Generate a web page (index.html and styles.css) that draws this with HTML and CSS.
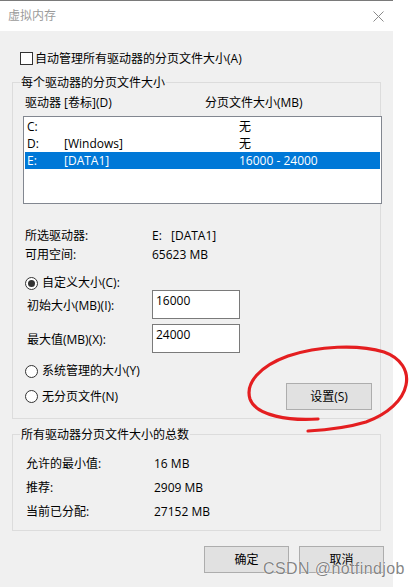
FILE: index.html
```html
<!DOCTYPE html>
<html lang="zh-CN">
<head>
<meta charset="utf-8">
<title>虚拟内存</title>
<link rel="stylesheet" href="styles.css">
</head>
<body>
<div class="window">
  <div class="titlebar">
    <span class="title">虚拟内存</span>
    <svg class="close" width="11" height="11" viewBox="0 0 11 11"><path d="M0.5 0.5 L10.5 10.5 M10.5 0.5 L0.5 10.5" stroke="#8a8a8a" stroke-width="1" fill="none"/></svg>
  </div>

  <div class="check-row">
    <span class="checkbox"></span>
    <span class="check-text">自动管理所有驱动器的分页文件大小(A)</span>
  </div>

  <div class="group group-drives">
    <div class="legend">每个驱动器的分页文件大小</div>
    <div class="col-header"><span class="h-drive">驱动器 [卷标](D)</span><span>分页文件大小(MB)</span></div>
    <div class="listbox">
      <div class="lrow"><span class="c-drive">C:</span><span class="c-label"></span><span class="c-size">无</span></div>
      <div class="lrow"><span class="c-drive">D:</span><span class="c-label">[Windows]</span><span class="c-size">无</span></div>
      <div class="lrow selected"><span class="c-drive">E:</span><span class="c-label">[DATA1]</span><span class="c-size">16000 - 24000</span></div>
    </div>
    <div class="info">
      <div class="kv"><span class="k">所选驱动器:</span><span class="v"><span class="v-drive">E:</span>[DATA1]</span></div>
      <div class="kv"><span class="k">可用空间:</span><span class="v">65623 MB</span></div>
    </div>
    <div class="radio-row r-custom"><span class="radio checked"></span><span class="radio-text">自定义大小(C):</span></div>
    <div class="field-row"><span class="field-label">初始大小(MB)(I):</span><div class="textbox">16000</div></div>
    <div class="field-row second"><span class="field-label">最大值(MB)(X):</span><div class="textbox">24000</div></div>
    <div class="radio-row r-system"><span class="radio"></span><span class="radio-text">系统管理的大小(Y)</span></div>
    <div class="radio-row r-none"><span class="radio"></span><span class="radio-text">无分页文件(N)</span><button class="btn btn-set">设置(S)</button></div>
  </div>

  <div class="group group-total">
    <div class="legend">所有驱动器分页文件大小的总数</div>
    <div class="totals">
      <div class="trow"><span class="tk">允许的最小值:</span><span>16 MB</span></div>
      <div class="trow"><span class="tk">推荐:</span><span>2909 MB</span></div>
      <div class="trow"><span class="tk">当前已分配:</span><span>27152 MB</span></div>
    </div>
  </div>

  <div class="actions">
    <button class="btn">确定</button>
    <button class="btn">取消</button>
  </div>

  <svg class="annotation" width="410" height="587" viewBox="0 0 410 587">
    <path d="M318 419 C290 421 256 416 250 399 C245 383 260 366 288 356 C318 346 358 344 384 352 C401 358 409 371 406 385 C403 400 388 414 366 422 C346 428 326 430 308 431" stroke="#e41e20" stroke-width="3.2" fill="none" stroke-linecap="round" stroke-linejoin="round"/>
  </svg>
  <div class="watermark">CSDN @notfindjob</div>
</div>
</body>
</html>
```

FILE: styles.css
```css
html, body {
  margin: 0;
  padding: 0;
  background: #ffffff;
}

body {
  font-family: "Open Sans", "Noto Sans CJK SC", sans-serif;
  font-size: 12px;
  color: #000000;
}

.window {
  position: relative;
  width: 393px;
  height: 586px;
  background: #f0f0f0;
  border-top: 1px solid #7a7a7a;
  overflow: visible;
}

.titlebar {
  height: 30px;
  background: #ffffff;
  display: flex;
  align-items: center;
  justify-content: space-between;
  padding: 0 9px 0 8px;
}

.title {
  color: #9b9b9b;
  font-size: 12px;
  line-height: 30px;
}

.close {
  display: block;
  margin-top: 1px;
}

.check-row {
  display: flex;
  align-items: center;
  height: 13px;
  margin-top: 21px;
  padding-left: 20px;
}

.checkbox {
  width: 13px;
  height: 13px;
  box-sizing: border-box;
  border: 1px solid #333333;
  background: #ffffff;
}

.check-text {
  margin-left: 2px;
  line-height: 16px;
}

.group {
  margin-left: 12px;
  width: 369px;
  box-sizing: border-box;
  border: 1px solid #dcdcdc;
}

.group-drives {
  margin-top: 17px;
  padding-bottom: 8px;
}

.legend {
  width: fit-content;
  margin: -8px 0 0 7px;
  padding: 0 1px;
  background: #f0f0f0;
  line-height: 16px;
}

.col-header {
  display: grid;
  grid-template-columns: 180px auto;
  margin-top: 4px;
  padding-left: 12px;
  line-height: 16px;
}

.listbox {
  margin-top: 5px;
  margin-left: 10px;
  width: 359px;
  height: 88px;
  box-sizing: border-box;
  border: 1px solid #828790;
  background: #ffffff;
  padding: 1px;
}

.lrow {
  display: flex;
  height: 17px;
  line-height: 17px;
  padding-left: 2px;
  width: 355px;
  box-sizing: border-box;
}

.lrow.selected {
  background: #0078d7;
  color: #ffffff;
}

.c-drive { width: 37px; }
.c-label { width: 175px; }

.info {
  margin-top: 22px;
  padding-left: 12px;
}

.kv {
  display: flex;
  line-height: 19px;
}

.k { width: 127px; }

.v-drive {
  display: inline-block;
  width: 19px;
}

.radio-row {
  display: flex;
  align-items: center;
  padding-left: 12px;
}

.r-custom {
  margin-top: 12px;
  height: 14px;
}

.r-system {
  margin-top: 11px;
  height: 14px;
}

.r-none {
  margin-top: 5px;
  height: 27px;
}

.radio {
  position: relative;
  width: 13px;
  height: 13px;
  box-sizing: border-box;
  border: 1px solid #333333;
  border-radius: 50%;
  background: #ffffff;
  flex: none;
}

.radio.checked::after {
  content: "";
  position: absolute;
  left: 2px;
  top: 2px;
  width: 7px;
  height: 7px;
  border-radius: 50%;
  background: #333333;
}

.radio-text {
  margin-left: 4px;
  line-height: 16px;
}

.field-row {
  display: flex;
  align-items: center;
  padding-left: 14px;
  height: 29px;
}

.field-row.second {
  margin-top: 5px;
}

.field-label {
  width: 125px;
  padding-top: 3px;
  line-height: 16px;
}

.textbox {
  width: 88px;
  height: 29px;
  box-sizing: border-box;
  border: 1px solid #7a7a7a;
  background: #ffffff;
  padding: 2px 0 0 3px;
  line-height: 16px;
}

.btn {
  width: 86px;
  height: 27px;
  box-sizing: border-box;
  border: 1px solid #adadad;
  background: #e1e1e1;
  font-family: "Open Sans", "Noto Sans CJK SC", sans-serif;
  font-size: 12px;
  color: #000000;
  padding: 0;
  margin: 0;
  line-height: 25px;
}

.btn-set {
  margin-left: auto;
  margin-right: 8px;
}

.group-total {
  margin-top: 15px;
  padding-bottom: 6px;
}

.totals {
  margin-top: 9px;
  padding-left: 13px;
}

.trow {
  display: flex;
  height: 24px;
  line-height: 24px;
}

.tk { width: 128px; }

.actions {
  display: flex;
  justify-content: flex-end;
  gap: 10px;
  margin-top: 15px;
  padding-right: 9px;
}

.actions .btn {
  width: 85px;
}

.annotation {
  position: absolute;
  left: 0;
  top: -1px;
  pointer-events: none;
}

.watermark {
  position: absolute;
  left: 263px;
  top: 558px;
  font-family: "Liberation Sans", Arial, sans-serif;
  font-size: 16px;
  letter-spacing: 0.4px;
  line-height: 20px;
  color: rgba(110, 110, 110, 0.85);
  text-shadow: 0 0 1px #ffffff, 0 0 1px #ffffff;
  white-space: nowrap;
}
```
